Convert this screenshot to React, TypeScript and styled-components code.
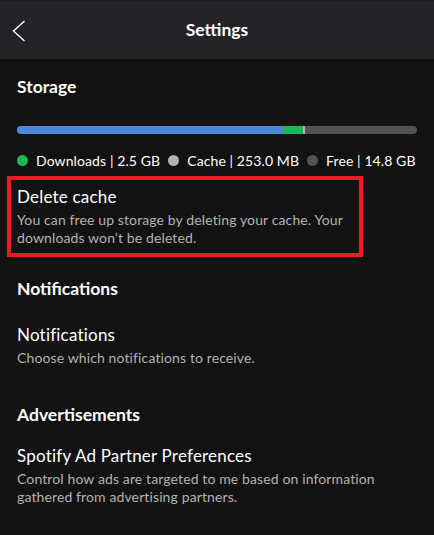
import { FC } from 'react';
import styled, { createGlobalStyle } from 'styled-components';

const GlobalStyle = createGlobalStyle`
  html, body {
    margin: 0;
    padding: 0;
    background: #121212;
  }
  body {
    font-family: Lato, 'Noto Sans', sans-serif;
    color: #ffffff;
  }
`;

interface Segment {
  color: string;
  width: number;
}

const segments: Segment[] = [
  { color: '#4a8ad9', width: 66.5 },
  { color: '#1db954', width: 5 },
  { color: '#b3b3b3', width: 0.5 },
];

const legend = [
  { color: '#1db954', label: 'Downloads | 2.5 GB' },
  { color: '#b3b3b3', label: 'Cache | 253.0 MB' },
  { color: '#535353', label: 'Free | 14.8 GB' },
];

const App: FC = () => {
  return (
    <Page>
      <GlobalStyle />
      <Header>
        <BackButton aria-label="Back">
          <svg width="14" height="22" viewBox="0 0 14 22" fill="none">
            <path d="M12.5 1 L1.5 11 L12.5 21" stroke="#ffffff" strokeWidth="1.4" />
          </svg>
        </BackButton>
        <Title>Settings</Title>
      </Header>

      <Content>
        <SectionTitle>Storage</SectionTitle>
        <Bar>
          {segments.map((s, i) => (
            <BarSegment key={i} $color={s.color} style={{ width: `${s.width}%` }} />
          ))}
        </Bar>
        <Legend>
          {legend.map((l) => (
            <LegendItem key={l.label}>
              <Dot $color={l.color} />
              {l.label}
            </LegendItem>
          ))}
        </Legend>

        <Highlighted>
          <ItemTitle>Delete cache</ItemTitle>
          <ItemText>
            You can free up storage by deleting your cache. Your downloads won’t be deleted.
          </ItemText>
        </Highlighted>

        <SectionTitle $top={21}>Notifications</SectionTitle>
        <Item $top={24}>
          <ItemTitle>Notifications</ItemTitle>
          <ItemText>Choose which notifications to receive.</ItemText>
        </Item>

        <SectionTitle $top={37}>Advertisements</SectionTitle>
        <Item $top={19}>
          <ItemTitle>Spotify Ad Partner Preferences</ItemTitle>
          <ItemText>
            Control how ads are targeted to me based on information gathered from advertising
            partners.
          </ItemText>
        </Item>
      </Content>
    </Page>
  );
};
export default App;

const Page = styled.div`
  width: 434px;
  min-height: 535px;
  background: #121212;
`;

const Header = styled.header`
  height: 59px;
  background: #232427;
  border-top: 1px solid #1b1c20;
  box-sizing: border-box;
  display: flex;
  align-items: center;
  justify-content: center;
  position: relative;
`;

const BackButton = styled.button`
  position: absolute;
  left: 12px;
  top: 19px;
  background: none;
  border: none;
  padding: 0;
  display: flex;
`;

const Title = styled.h1`
  margin: -2px 0 0 0;
  font-size: 17.5px;
  font-weight: 700;
`;

const Content = styled.main`
  padding: 17px 17px 0 17px;
`;

const SectionTitle = styled.h2<{ $top?: number }>`
  margin: ${(p) => p.$top ?? 0}px 0 0 0;
  font-size: 17.5px;
  font-weight: 700;
  line-height: 22px;
`;

const Bar = styled.div`
  margin-top: 28px;
  height: 8px;
  border-radius: 4px;
  background: #535353;
  display: flex;
  overflow: hidden;
`;

const BarSegment = styled.div<{ $color: string }>`
  height: 100%;
  background: ${(p) => p.$color};
`;

const Legend = styled.div`
  margin-top: 18px;
  display: flex;
  align-items: center;
  gap: 8px;
  font-size: 14px;
  letter-spacing: 0.1px;
  color: #ffffff;
  white-space: nowrap;
`;

const LegendItem = styled.span`
  display: flex;
  align-items: center;
  gap: 8px;
`;

const Dot = styled.span<{ $color: string }>`
  width: 11px;
  height: 11px;
  border-radius: 50%;
  background: ${(p) => p.$color};
`;

const Item = styled.div<{ $top: number }>`
  margin-top: ${(p) => p.$top}px;
`;

const Highlighted = styled.div`
  margin: 7px 0 0 -10px;
  width: 356px;
  box-sizing: border-box;
  border: 4px solid #ed1c24;
  padding: 6px 6px 6px 6px;
`;

const ItemTitle = styled.div`
  font-size: 17px;
  letter-spacing: 0.2px;
  line-height: 22px;
  color: #ffffff;
  margin-bottom: 3px;
`;

const ItemText = styled.div`
  font-size: 14px;
  letter-spacing: 0.12px;
  line-height: 18px;
  color: #b3b3b3;
`;
